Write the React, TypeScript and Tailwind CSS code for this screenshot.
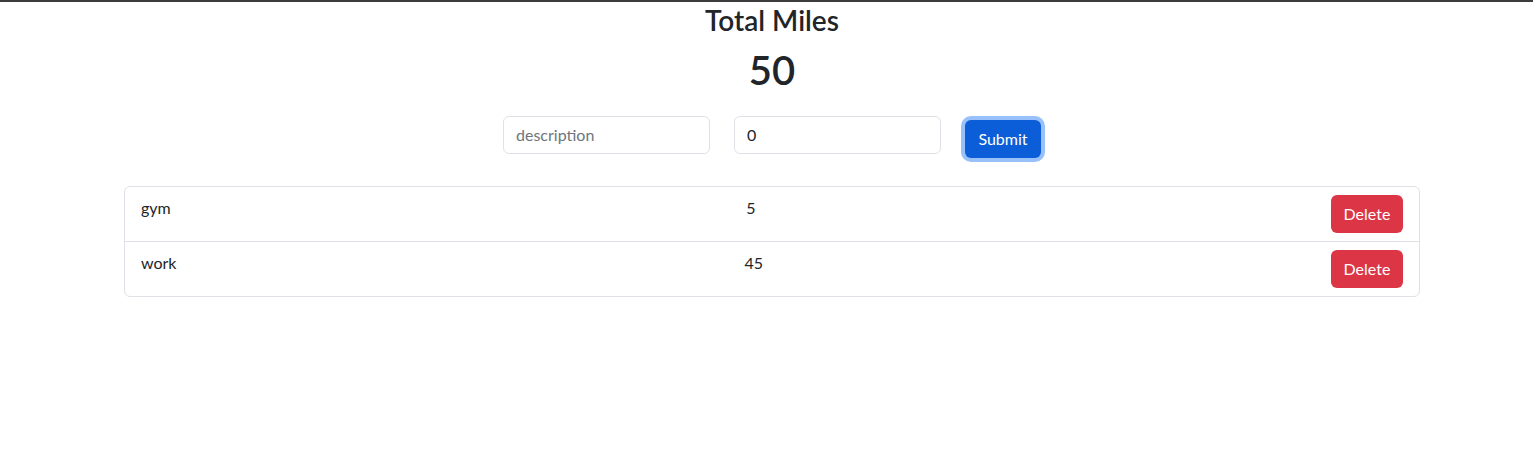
import { useState } from 'react';

type Trip = { id: number; description: string; miles: number };

export default function App() {
  const [trips, setTrips] = useState<Trip[]>([
    { id: 1, description: 'gym', miles: 5 },
    { id: 2, description: 'work', miles: 45 },
  ]);
  const [description, setDescription] = useState('');
  const [miles, setMiles] = useState('0');

  const total = trips.reduce((sum, t) => sum + t.miles, 0);

  const handleSubmit = (e: React.FormEvent) => {
    e.preventDefault();
    if (!description) return;
    setTrips([...trips, { id: Date.now(), description, miles: Number(miles) || 0 }]);
    setDescription('');
    setMiles('0');
  };

  return (
    <div className="min-h-[464px] border-t-2 border-[#3c3c3c] bg-white text-[#212529] font-['Lato','Noto_Sans',sans-serif]">
      <div className="w-[1320px] ml-[112px] px-3">
        {/* ================= TOTAL ================= */}
        <h3 className="text-center text-[28px] leading-[1.2] font-semibold mt-[2px]">Total Miles</h3>
        <h1 className="text-center text-[40px] leading-[1.2] font-semibold mt-[8px]">{total}</h1>

        {/* ================= FORM ================= */}
        <form onSubmit={handleSubmit} className="flex justify-center items-start gap-6 mt-[22px]">
          <input
            value={description}
            onChange={(e) => setDescription(e.target.value)}
            placeholder="description"
            className="w-[207px] h-[38px] px-3 text-base border border-[#dee2e6] rounded-md placeholder:text-[#6c757d] outline-none"
          />
          <input
            value={miles}
            onChange={(e) => setMiles(e.target.value)}
            className="w-[207px] h-[38px] px-3 text-base border border-[#dee2e6] rounded-md outline-none"
          />
          <button
            type="submit"
            className="mt-1 w-[76px] h-[38px] text-base text-white bg-[#0b5ed7] rounded-md ring-4 ring-[#98c1fb]"
          >
            Submit
          </button>
        </form>

        {/* ================= LIST ================= */}
        <ul className="mt-[28px] border border-[#dee2e6] rounded-md">
          {trips.map((t, i) => (
            <li
              key={t.id}
              className={`flex justify-between items-start px-4 py-2 ${
                i > 0 ? 'border-t border-[#dee2e6]' : ''
              }`}
            >
              <span className="text-base leading-6 mt-[1px]">{t.description}</span>
              <span className="text-base leading-6 mt-[1px]">{t.miles}</span>
              <button
                onClick={() => setTrips(trips.filter((x) => x.id !== t.id))}
                className="w-[72px] h-[38px] text-base text-white bg-[#dc3545] rounded-md"
              >
                Delete
              </button>
            </li>
          ))}
        </ul>
      </div>
    </div>
  );
}
